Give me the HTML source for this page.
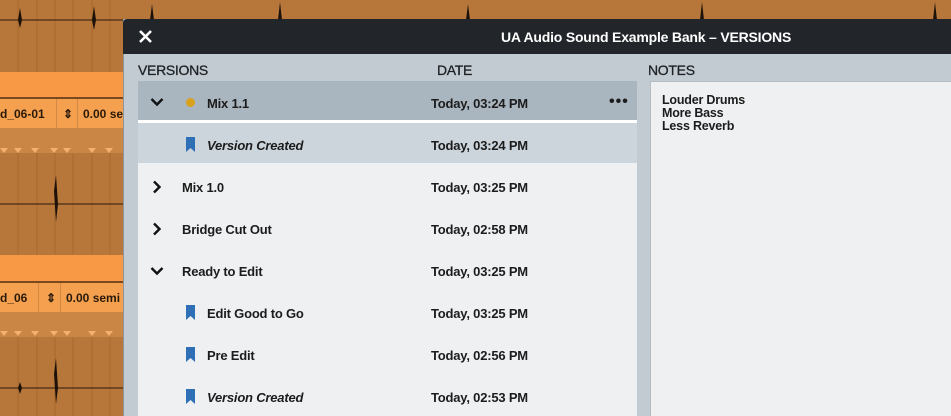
<!DOCTYPE html>
<html><head><meta charset="utf-8"><style>
*{margin:0;padding:0;box-sizing:border-box}
html,body{width:951px;height:416px;overflow:hidden}
body{position:relative;background:#b87a3e;font-family:"Liberation Sans",sans-serif}
.a{position:absolute}
.dark{background:#b8773a}
.bright{background:#f89a45}
.lab{background:#f5a04f;border-top:2px solid #7a4a1e}
.lab span{position:absolute;top:8px;font-size:12px;font-weight:bold;color:#2a1a0a}
.mid{background:#c98645}
.row{position:absolute;left:138px;width:499px;height:42px;font-size:13px;font-weight:bold;color:#1c1c1c;letter-spacing:-0.2px}
.row .t{position:absolute;top:15px}
.row .d{position:absolute;left:293px;top:15px}
.bm{position:absolute;left:48px;top:14px;width:9px;height:15px}
.hd{position:absolute;top:62px;font-size:14px;color:#1e2225;letter-spacing:-0.3px;-webkit-text-stroke:0.3px #1e2225}
</style></head><body>
<div class="a dark" style="left:0;top:0;width:951px;height:72px"></div>
<div class="a bright" style="left:0;top:72px;width:951px;height:26px"></div>
<div class="a lab" style="left:0;top:97px;width:951px;height:31px"><span style="left:0">d_06-01</span><span style="left:63px">⇕</span><span style="left:83px">0.00 semi</span></div>
<div class="a" style="left:56px;top:99px;width:1px;height:29px;background:#d08a45"></div>
<div class="a" style="left:77px;top:99px;width:1px;height:29px;background:#d08a45"></div>
<div class="a mid" style="left:0;top:128px;width:951px;height:25px"></div>
<div class="a dark" style="left:0;top:153px;width:951px;height:102px"></div>
<div class="a bright" style="left:0;top:255px;width:951px;height:26px"></div>
<div class="a lab" style="left:0;top:281px;width:951px;height:31px"><span style="left:0">d_06</span><span style="left:46px">⇕</span><span style="left:66px">0.00 semi</span></div>
<div class="a" style="left:38px;top:283px;width:1px;height:29px;background:#d08a45"></div>
<div class="a" style="left:60px;top:283px;width:1px;height:29px;background:#d08a45"></div>
<div class="a mid" style="left:0;top:312px;width:951px;height:25px"></div>
<div class="a dark" style="left:0;top:337px;width:951px;height:79px"></div>
<svg class="a" style="left:0;top:0" width="951" height="416">
<g stroke="#a8682c" stroke-width="1">
<line x1="18" y1="0" x2="18" y2="72"/><line x1="37" y1="0" x2="37" y2="72"/><line x1="55" y1="0" x2="55" y2="72"/><line x1="73" y1="0" x2="73" y2="72"/><line x1="92" y1="0" x2="92" y2="72"/><line x1="110" y1="0" x2="110" y2="72"/>
<line x1="18" y1="153" x2="18" y2="255"/><line x1="37" y1="153" x2="37" y2="255"/><line x1="55" y1="153" x2="55" y2="255"/><line x1="73" y1="153" x2="73" y2="255"/><line x1="92" y1="153" x2="92" y2="255"/><line x1="110" y1="153" x2="110" y2="255"/>
<line x1="18" y1="337" x2="18" y2="416"/><line x1="37" y1="337" x2="37" y2="416"/><line x1="55" y1="337" x2="55" y2="416"/><line x1="73" y1="337" x2="73" y2="416"/><line x1="92" y1="337" x2="92" y2="416"/><line x1="110" y1="337" x2="110" y2="416"/>
</g>
<g stroke="#2a1a0a" stroke-width="1"><line x1="0" y1="20" x2="123" y2="20"/><line x1="0" y1="204" x2="123" y2="204"/><line x1="0" y1="388" x2="123" y2="388"/></g>
<g fill="#1c120a">
<path d="M18 20 L20 8 L22 20 L20 28Z"/><path d="M92 20 L94 6 L96 20 L94 30Z"/><path d="M54 191 L56 175 L58 204 L56 222Z"/><path d="M54 374 L56 358 L58 388 L56 404Z"/><path d="M18 388 L20 382 L22 388 L20 394Z"/>
<path d="M150 20 L152 4 L154 20Z"/><path d="M278 20 L280 2 L282 20Z"/><path d="M466 20 L468 4 L470 20Z"/><path d="M700 20 L702 2 L704 20Z"/><path d="M933 20 L935 2 L937 20Z"/>
</g>
<g fill="#f5b070">
<path d="M0 148h8l-4 5z"/><path d="M14 148h8l-4 5z"/><path d="M31 148h8l-4 5z"/><path d="M50 148h8l-4 5z"/><path d="M63 148h8l-4 5z"/><path d="M88 148h8l-4 5z"/><path d="M105 148h8l-4 5z"/>
<path d="M0 331h8l-4 5z"/><path d="M14 331h8l-4 5z"/><path d="M31 331h8l-4 5z"/><path d="M50 331h8l-4 5z"/><path d="M63 331h8l-4 5z"/><path d="M88 331h8l-4 5z"/><path d="M105 331h8l-4 5z"/>
</g>
</svg>
<div class="a" style="left:123px;top:19px;width:828px;height:400px;background:#c3cbd2;border-left:1px solid #8d959c"></div>
<div class="a" style="left:123px;top:19px;width:828px;height:35px;background:#22262a;border-radius:4px 0 0 0"></div>
<svg class="a" style="left:138px;top:29px" width="15" height="15"><path d="M2 2L13 13M13 2L2 13" stroke="#fff" stroke-width="2.6"/></svg>
<div class="a" style="left:501px;top:29px;font-size:14px;font-weight:bold;color:#fff;letter-spacing:-0.2px">UA Audio Sound Example Bank – VERSIONS</div>
<div class="hd" style="left:138px">VERSIONS</div>
<div class="hd" style="left:437px">DATE</div>
<div class="hd" style="left:648px">NOTES</div>
<div class="a" style="left:138px;top:81px;width:499px;height:340px;background:#eef0f2"></div>
<div class="a" style="left:650px;top:81px;width:301px;height:340px;background:#eef0f2;border-left:1px solid #b5bcc2;border-top:1px solid #b5bcc2"></div>
<div class="a" style="left:662px;top:94px;font-size:12.5px;font-weight:bold;color:#1c1c1c;line-height:13px;letter-spacing:-0.2px">Louder Drums<br>More Bass<br>Less Reverb</div>

<div class="row" style="top:81px;height:39px;background:#a9b5bf">
<svg class="a" style="left:12px;top:16px" width="14" height="10"><path d="M1.5 2L7 7.5L12.5 2" stroke="#111" stroke-width="2.4" fill="none"/></svg>
<div class="a" style="left:48px;top:17px;width:9px;height:9px;border-radius:50%;background:#d9a21c"></div>
<span class="t" style="left:69px">Mix 1.1</span><span class="d">Today, 03:24 PM</span>
<span class="a" style="left:471px;top:12px;font-size:16px;letter-spacing:1px">•••</span>
</div>
<div class="a" style="left:138px;top:120px;width:499px;height:3px;background:#fff"></div>
<div class="row" style="top:123px;height:40px;background:#ccd5dc">
<svg class="bm" viewBox="0 0 9 15"><path d="M0 0H9V15L4.5 11L0 15Z" fill="#2f6fb5"/></svg>
<span class="t" style="left:69px;font-style:italic">Version Created</span><span class="d">Today, 03:24 PM</span></div>

<div class="row" style="top:165px"><svg class="a" style="left:14px;top:15px" width="10" height="14"><path d="M2 1.5L7.5 7L2 12.5" stroke="#111" stroke-width="2.4" fill="none"/></svg><span class="t" style="left:44px">Mix 1.0</span><span class="d">Today, 03:25 PM</span></div>
<div class="row" style="top:207px"><svg class="a" style="left:14px;top:15px" width="10" height="14"><path d="M2 1.5L7.5 7L2 12.5" stroke="#111" stroke-width="2.4" fill="none"/></svg><span class="t" style="left:44px">Bridge Cut Out</span><span class="d">Today, 02:58 PM</span></div>
<div class="row" style="top:249px"><svg class="a" style="left:12px;top:17px" width="14" height="10"><path d="M1.5 2L7 7.5L12.5 2" stroke="#111" stroke-width="2.4" fill="none"/></svg><span class="t" style="left:44px">Ready to Edit</span><span class="d">Today, 03:25 PM</span></div>
<div class="row" style="top:291px"><svg class="bm" viewBox="0 0 9 15"><path d="M0 0H9V15L4.5 11L0 15Z" fill="#2f6fb5"/></svg><span class="t" style="left:69px">Edit Good to Go</span><span class="d">Today, 03:25 PM</span></div>
<div class="row" style="top:333px"><svg class="bm" viewBox="0 0 9 15"><path d="M0 0H9V15L4.5 11L0 15Z" fill="#2f6fb5"/></svg><span class="t" style="left:69px">Pre Edit</span><span class="d">Today, 02:56 PM</span></div>
<div class="row" style="top:375px"><svg class="bm" viewBox="0 0 9 15"><path d="M0 0H9V15L4.5 11L0 15Z" fill="#2f6fb5"/></svg><span class="t" style="left:69px;font-style:italic">Version Created</span><span class="d">Today, 02:53 PM</span></div>
</body></html>
